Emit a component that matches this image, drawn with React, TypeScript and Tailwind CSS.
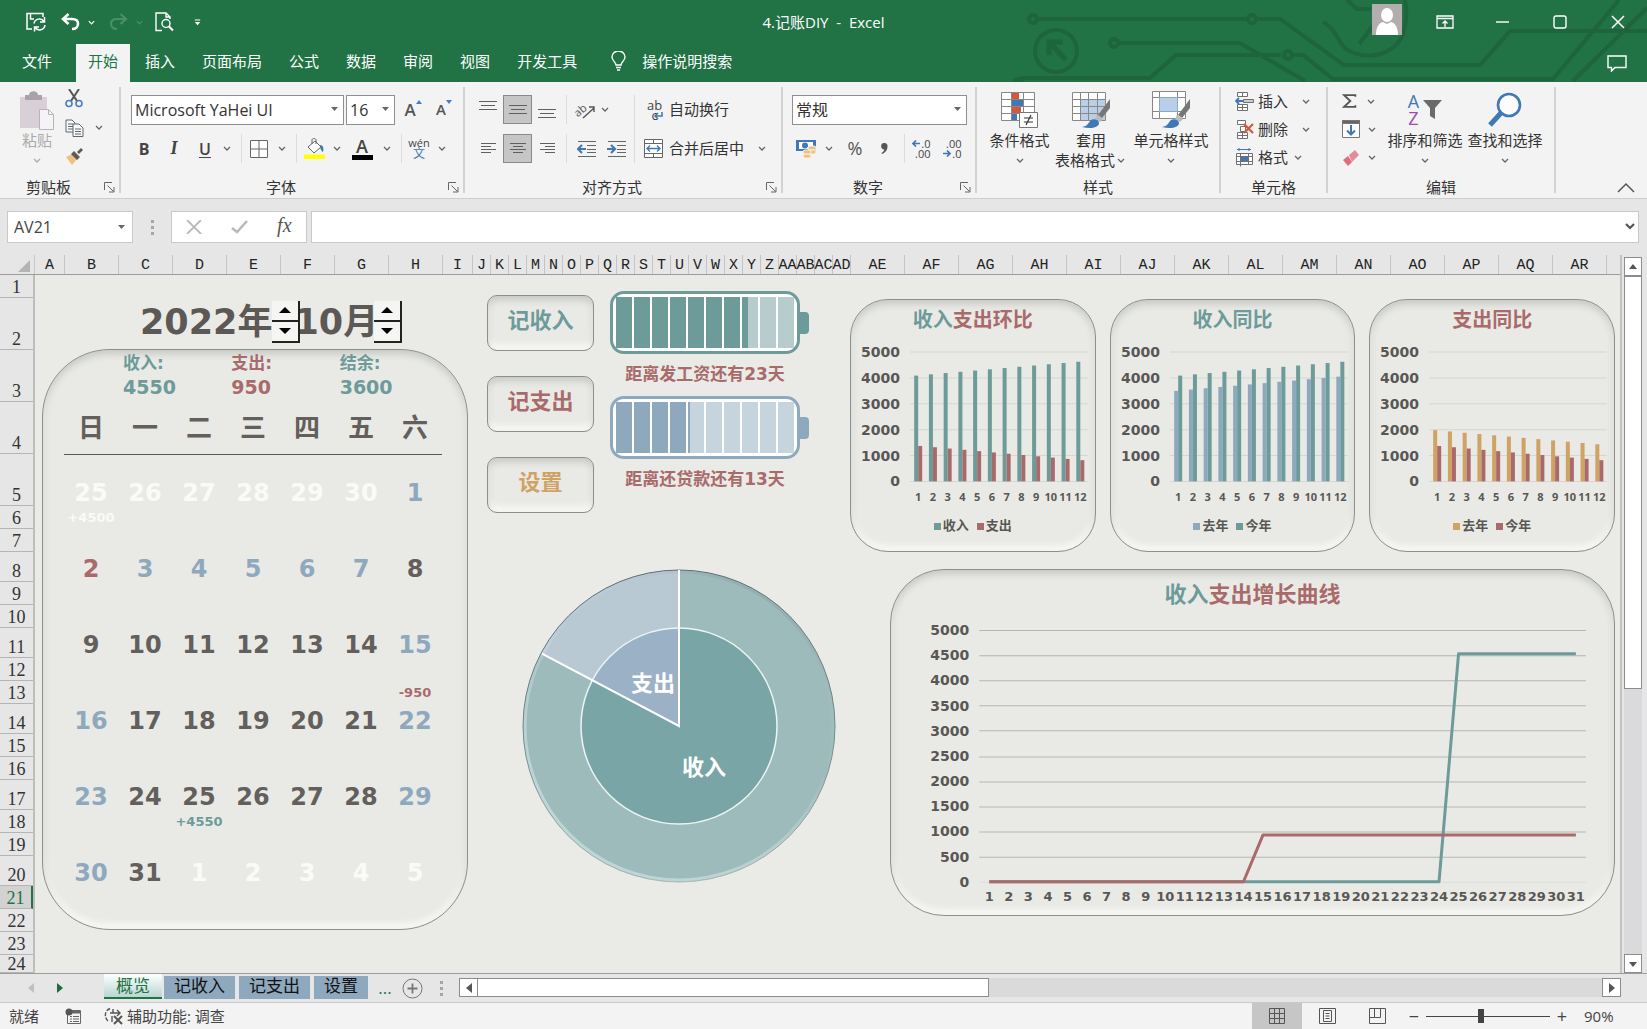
import { useState } from "react";
import type { ReactNode } from "react";

const UI = "font-['Open_Sans','Noto_Sans_CJK_SC',sans-serif]";
const DISPLAY = "font-['DejaVu_Sans','Noto_Sans_CJK_SC',sans-serif] font-bold";
const CARD =
  "border border-[#8d8f8d] bg-[#e9eae5] shadow-[inset_0_4px_7px_rgba(60,70,65,0.2),inset_0_-5px_7px_rgba(255,255,255,0.75)]";

const TEAL = "#6d9b9a";
const RED = "#a96a6c";
const BLUE = "#8ea9be";
const GOLD = "#d0a263";

const TABS = ["插入", "页面布局", "公式", "数据", "审阅", "视图", "开发工具"];

const COLUMNS = [
  { name: "A", w: "w-[30px]" },
  ..."BCDEFGH".split("").map((name) => ({ name, w: "w-[54px]" })),
  { name: "I", w: "w-[30px]" },
  ...[..."JKLMNOPQRSTUVWXYZ".split(""), "AA", "AB", "AC", "AD"].map((name) => ({ name, w: "w-[18px]" })),
  ...["AE", "AF", "AG", "AH", "AI", "AJ", "AK", "AL", "AM", "AN", "AO", "AP", "AQ", "AR"].map((name) => ({
    name,
    w: "w-[54px]",
  })),
];

const ROWS = [
  "h-[23px]", "h-[52px]", "h-[52px]", "h-[52px]", "h-[52px]", "h-[23px]", "h-[23px]", "h-[30px]",
  "h-[23px]", "h-[23px]", "h-[30px]", "h-[23px]", "h-[23px]", "h-[30px]", "h-[23px]", "h-[23px]",
  "h-[30px]", "h-[23px]", "h-[23px]", "h-[30px]", "h-[23px]", "h-[23px]", "h-[23px]", "h-[18px]",
];

const DAY_COLORS: Record<string, string> = {
  k: "text-[#635f5c]",
  b: "text-[#8ea9be]",
  r: "text-[#a96a6c]",
  w: "text-[#fafaf8]",
};

const WEEKS = [
  { days: [25, 26, 27, 28, 29, 30, 1], colors: "wwwwwwb", income: { 0: "+4500" } },
  { days: [2, 3, 4, 5, 6, 7, 8], colors: "rbbbbbk" },
  { days: [9, 10, 11, 12, 13, 14, 15], colors: "kkkkkkb", expense: { 6: "-950" } },
  { days: [16, 17, 18, 19, 20, 21, 22], colors: "bkkkkkb" },
  { days: [23, 24, 25, 26, 27, 28, 29], colors: "bkkkkkb", income: { 2: "+4550" } },
  { days: [30, 31, 1, 2, 3, 4, 5], colors: "bkwwwww" },
] as {
  days: number[];
  colors: string;
  income?: Record<number, string>;
  expense?: Record<number, string>;
}[];

const series = (from: number, to: number) =>
  Array.from({ length: 12 }, (_, i) => from + ((to - from) * i) / 11);

const INCOME = series(4090, 4625);
const EXPENSE = series(1370, 820);
const INCOME_LAST = series(3500, 4050);
const EXPENSE_LAST = series(1980, 1435);

/* ---------- small shared pieces ---------- */

const Chev = ({ className = "w-3" }: { className?: string }) => (
  <span className={`flex shrink-0 justify-center ${className}`}>
    <svg width="8" height="5" viewBox="0 0 8 5" fill="none" stroke="#666" strokeWidth="1.3">
      <path d="M1 1l3 3 3-3" />
    </svg>
  </span>
);

const Tool = ({
  label,
  className = "w-[34px]",
  on = false,
  children,
}: {
  label: string;
  className?: string;
  on?: boolean;
  children: ReactNode;
}) => (
  <button
    type="button"
    aria-label={label}
    className={`flex h-[29px] shrink-0 items-center justify-center ${className} ${
      on ? "border border-[#8a8a8a] bg-[#c6c6c6]" : ""
    }`}
  >
    {children}
  </button>
);

const Sep = ({ className = "" }: { className?: string }) => (
  <span className={`w-px shrink-0 self-stretch bg-[#dcdcdc] ${className}`} />
);

const Group = ({
  title,
  className,
  launcher = false,
  children,
}: {
  title: string;
  className: string;
  launcher?: boolean;
  children: ReactNode;
}) => (
  <section className={`relative flex shrink-0 flex-col justify-between border-r-2 border-[#d2d2d2] ${className}`}>
    {children}
    <h2 className={`text-center text-[15px] leading-3 text-[#333] ${launcher ? "pr-[22px]" : ""}`}>{title}</h2>
    {launcher && (
      <button type="button" aria-label={`${title}设置`} className="absolute right-1 bottom-0">
        <svg width="11" height="11" viewBox="0 0 11 11" fill="none" stroke="#666">
          <path d="M.5 8V.5H8M3.5 3.5l6 6M10 5v5H5" />
        </svg>
      </button>
    )}
  </section>
);

const Picker = ({ label, value, className }: { label: string; value: string; className: string }) => (
  <span className={`relative flex ${className}`}>
    <select
      aria-label={label}
      className="h-[30px] w-full appearance-none border border-[#8f8f8f] bg-white pl-[3px] text-[16px] leading-none text-[#333]"
    >
      <option>{value}</option>
    </select>
    <svg className="pointer-events-none absolute top-3 right-1.5" width="7" height="4" viewBox="0 0 7 4" fill="#666">
      <path d="M0 0h7L3.500 4z" />
    </svg>
  </span>
);

const Lines = ({ rows, w = 18 }: { rows: [number, number, number][]; w?: number }) => (
  <svg width={w} height="18" viewBox={`0 0 ${w} 18`} stroke="#5f5f5f" strokeWidth="1">
    {rows.map(([x1, x2, y]) => (
      <line key={y} x1={x1} x2={x2} y1={y + 0.5} y2={y + 0.5} />
    ))}
  </svg>
);

const Arrow = ({ dir, color = "#555" }: { dir: "up" | "down" | "left" | "right"; color?: string }) => {
  const d = { up: "M1 7l4-5 4 5z", down: "M1 3l4 5 4-5z", left: "M8 0v10L2 5z", right: "M2 0v10l6-5z" }[dir];
  return (
    <svg width="10" height="10" viewBox="0 0 10 10" fill={color}>
      <path d={d} />
    </svg>
  );
};

/* ---------- title bar ---------- */

const Circuit = () => (
  <svg
    className="pointer-events-none absolute top-0 right-0"
    width="640"
    height="82"
    viewBox="0 0 640 82"
    fill="none"
    stroke="#1e643d"
    strokeWidth="4"
  >
    <circle cx="26" cy="19" r="4" />
    <path d="M31 19h209M251 19h22l64 46h136l30-34h137" />
    <circle cx="245" cy="19" r="4" />
    <circle cx="107" cy="43" r="4" />
    <path d="M112 43h121l65 38M13 78h130l26-23h105M286 55h10l30 24h220l66-79M640 8l-74 73" />
    <circle cx="281" cy="55" r="4" />
    <circle cx="49" cy="51" r="21" />
    <path d="M42 55V42h14M43 43l16 17" strokeWidth="5" />
    <path d="M316 22c12 6 14 18 22 26 18 14 50 8 58-14 4-12 4-24 2-34M340 0l10 9h14M352 44l20-26" />
    <path d="M7 82a5 5 0 0 1 9 0" />
  </svg>
);

const TitleBar = () => (
  <header className="relative bg-[#217346] text-white">
    <Circuit />
    <div className="relative flex h-11 items-center justify-between">
      <div className="flex w-[300px] items-center pl-[26px]">
        <button type="button" aria-label="保存">
          <svg width="20" height="20" viewBox="0 0 20 20" fill="none" stroke="#fff" strokeWidth="1.5">
            <path d="M6 17H1V1.500h16V5M4.500 1.500V7H8" />
            <path d="M8 11.500a5.500 5.500 0 0 1 10-2M18.500 5v5h-4.500M19 13a5.500 5.500 0 0 1-10 2.500M8.500 19.500v-4.500H13" />
          </svg>
        </button>
        <button type="button" aria-label="撤消" className="ml-[15px] flex items-center">
          <svg width="19" height="18" viewBox="0 0 19 18" fill="none" stroke="#fff" strokeWidth="2.600">
            <path d="M7.500 1L2 6l5.500 5M2.500 6H11c4 0 6 2 6 4.800S15 16 11 16" />
          </svg>
        </button>
        <svg className="ml-2" width="7" height="5" viewBox="0 0 8 5" fill="none" stroke="#fff" strokeWidth="1.400">
          <path d="M1 1l3 3 3-3" />
        </svg>
        <button type="button" aria-label="恢复" className="ml-3.5">
          <svg width="19" height="18" viewBox="0 0 19 18" fill="none" stroke="#4b8f69" strokeWidth="2.200">
            <path d="M11.500 1L17 6l-5.500 5M16.500 6H8c-4 0-6 2-6 4.800S4 16 8 16" />
          </svg>
        </button>
        <svg className="ml-2" width="7" height="5" viewBox="0 0 8 5" fill="none" stroke="#4b8f69" strokeWidth="1.400">
          <path d="M1 1l3 3 3-3" />
        </svg>
        <button type="button" aria-label="打印预览" className="ml-3">
          <svg width="19" height="20" viewBox="0 0 19 20" fill="none" stroke="#fff" strokeWidth="1.400">
            <path d="M7 18.500H1V1h10l4 4v2M11 1v4h4" />
            <circle cx="11" cy="11.500" r="4" />
            <path d="M14 14.500l4 4" strokeWidth="2.200" />
          </svg>
        </button>
        <svg className="ml-5" width="7" height="7" viewBox="0 0 9 8" fill="#fff">
          <path d="M1 0h7v1.400H1zM1 3.500h7l-3.500 4z" />
        </svg>
      </div>
      <h1 className="text-[15px] leading-5 whitespace-pre">4.记账DIY  -  Excel</h1>
      <div className="flex w-[300px] items-center justify-end">
        <svg width="30" height="31" viewBox="0 0 30 31" className="mb-1.5">
          <path fill="#b3aead" d="M0 0h30v31H0z" />
          <ellipse cx="15" cy="11" rx="6" ry="7" fill="#fff" />
          <path d="M4 31c0-8 3-12 7-13l4 2 4-2c4 1 7 5 7 13z" fill="#fff" />
        </svg>
        <button type="button" aria-label="功能区显示选项" className="flex w-[86px] justify-center">
          <svg width="18" height="14" viewBox="0 0 18 14" fill="none" stroke="#fff" strokeWidth="1.300">
            <path d="M1 1h16v12H1zM1 3.500h16M9 12V6M6.500 8.500L9 6l2.500 2.500" />
          </svg>
        </button>
        <button type="button" aria-label="最小化" className="flex w-[29px] justify-center">
          <svg width="13" height="3" viewBox="0 0 13 3">
            <path stroke="#fff" strokeWidth="1.400" d="M0 1h13" />
          </svg>
        </button>
        <button type="button" aria-label="还原" className="flex w-[86px] justify-center">
          <svg width="14" height="14" viewBox="0 0 14 14" fill="none" stroke="#fff" strokeWidth="1.400">
            <rect x="1" y="1" width="12" height="12" rx="2" />
          </svg>
        </button>
        <button type="button" aria-label="关闭" className="mr-3.5 flex w-[30px] justify-center">
          <svg width="14" height="14" viewBox="0 0 14 14" fill="none" stroke="#fff" strokeWidth="1.500">
            <path d="M1 1l12 12M13 1L1 13" />
          </svg>
        </button>
      </div>
    </div>
    <nav className="relative flex h-[38px] items-stretch gap-[3px] pl-2.5 text-[15px] leading-[34px]">
      <button type="button" className="mr-[9px] px-3 pb-1">
        文件
      </button>
      <button type="button" className="bg-[#f3f3f3] px-3 pb-1 text-[#217346]">
        开始
      </button>
      {TABS.map((tab) => (
        <button key={tab} type="button" className="px-3 pb-1">
          {tab}
        </button>
      ))}
      <button type="button" className="flex items-center gap-4 pb-1 pl-[19px]">
        <svg width="15" height="20" viewBox="0 0 15 20" fill="none" stroke="#fff" strokeWidth="1.400">
          <path d="M5 14c0-3-4-4-4-8a6.500 6 0 0 1 13 0c0 4-4 5-4 8zM5 16.500h5M6 19h3" />
        </svg>
        操作说明搜索
      </button>
      <button type="button" aria-label="批注" className="mr-5 ml-auto">
        <svg width="20" height="17" viewBox="0 0 20 17" fill="none" stroke="#fff" strokeWidth="1.400">
          <path d="M1 1h18v11.500H8L4.500 16v-3.500H1z" />
        </svg>
      </button>
    </nav>
  </header>
);

/* ---------- ribbon ---------- */

const BrushOverlay = () => (
  <>
    <path d="M38 8v9l-8 10-4-3z" fill="#777" />
    <path d="M25 24l6 4-3 3-5-3z" fill="#bbb" />
    <path d="M10 36c6-1 6-4 9-7 3-2 8 0 8 3 0 5-9 6-17 4z" fill="#3f78b5" />
  </>
);

const BigButton = ({
  icon,
  lines,
  className,
}: {
  icon: ReactNode;
  lines: string[];
  className: string;
}) => (
  <button type="button" className={`flex shrink-0 flex-col items-center text-[15px] text-[#333] ${className}`}>
    <span className="flex h-[38px] items-center">{icon}</span>
    <span className="mt-0.5 leading-[19px]">{lines[0]}</span>
    <span className="flex items-center leading-[20px]">
      {lines[1]}
      <span className="flex h-5 items-center">
        <Chev />
      </span>
    </span>
  </button>
);

const CellIcon = ({ children }: { children: ReactNode }) => (
  <svg width="19" height="19" viewBox="0 0 19 19" fill="none" stroke="#707070">
    {children}
  </svg>
);

const Ribbon = () => (
  <div className="flex h-[117px] border-b border-[#cdcdcd] bg-[#f3f3f3] py-[5px]">
    <Group title="剪贴板" className="w-[121px]" launcher>
      <div className="flex pt-[3px] pl-[17px]">
        <button type="button" className="flex w-[40px] flex-col items-center text-[15px] leading-5 text-[#ababab]">
          <svg width="36" height="40" viewBox="0 0 36 40">
            <path fill="#d8d0d6" d="M1 7h27v31H1z" />
            <path fill="#a8a3a8" d="M6 5h4c0-5 9-5 9 0h4v5H6z" />
            <path fill="#f6f3f6" stroke="#b9b4b9" d="M20.500 19.500h9l5 5v15h-14zM29.500 19.500v5h5" />
          </svg>
          <span>粘贴</span>
          <span className="flex h-5 items-center opacity-50">
            <Chev />
          </span>
        </button>
        <div className="flex flex-col">
          <Tool label="剪切">
            <svg className="-mt-3" width="18" height="19" viewBox="0 0 18 19" fill="none" strokeWidth="2">
              <path stroke="#555" d="M4 0l8 12M14 0L6 12" />
              <circle cx="4" cy="14.500" r="3" stroke="#4a7dbb" strokeWidth="1.600" />
              <circle cx="14" cy="14.500" r="3" stroke="#4a7dbb" strokeWidth="1.600" />
            </svg>
          </Tool>
          <div className="-mt-1.5 flex items-center">
            <Tool label="复制">
              <svg width="19" height="18" viewBox="0 0 19 18" fill="#fafafa" stroke="#5d6670">
                <path d="M1 1h6l3 3v9H1zM3 5h5M3 7.500h5M3 10h5" />
                <path d="M8 5h6l4 4v8.500H8zM10 10h6M10 12.500h6M10 15h6" />
              </svg>
            </Tool>
            <Chev className="w-4" />
          </div>
          <Tool label="格式刷">
            <svg width="18" height="17" viewBox="0 0 18 17">
              <path fill="#eec27c" d="M1 9l6-3 5 5-5 6z" />
              <path fill="#5b5b5b" d="M6 6l3-3 6 6-3 3zM12 4l4-4 2 2-4 4z" />
            </svg>
          </Tool>
        </div>
      </div>
    </Group>

    <Group title="字体" className="w-[344px]" launcher>
      <div className="flex flex-col gap-2.5 pt-2 pl-2">
        <div className="flex h-[29px] gap-0.5 pl-0.5">
          <Picker label="字体" value="Microsoft YaHei UI" className="w-[213px]" />
          <Picker label="字号" value="16" className="w-[49px]" />
          <Tool label="增大字号" className="w-[32px] text-[17px] font-semibold text-[#555]">
            A
            <svg className="mb-4" width="6" height="4" viewBox="0 0 6 4" fill="#4a7dbb">
              <path d="M0 4l3-4 3 4z" />
            </svg>
          </Tool>
          <Tool label="减小字号" className="w-[26px] text-[15px] font-semibold text-[#555]">
            A
            <svg className="mb-4" width="6" height="4" viewBox="0 0 6 4" fill="#4a7dbb">
              <path d="M0 0l3 4 3-4z" />
            </svg>
          </Tool>
        </div>
        <div className="flex items-center text-[#444]">
          <Tool label="加粗" className="w-[30px] text-[16px] font-bold">
            B
          </Tool>
          <Tool label="倾斜" className="w-[30px] font-['Liberation_Serif',serif] text-[18px] font-bold italic">
            I
          </Tool>
          <Tool label="下划线" className="w-[32px] text-[16px] font-semibold underline underline-offset-2">
            U
          </Tool>
          <Chev />
          <Sep className="ml-2" />
          <Tool label="边框">
            <svg width="18" height="18" viewBox="0 0 18 18" fill="#fff" stroke="#666">
              <path d="M.5.5h17v17H.5zM9 .5v17M.5 9h17" />
            </svg>
          </Tool>
          <Chev />
          <Sep className="ml-2" />
          <Tool label="填充颜色">
            <svg width="21" height="21" viewBox="0 0 21 21">
              <path d="M4 9l7-6 6 6-7 6z" fill="#fff" stroke="#666" />
              <path d="M8 6V2c0-2 4-2 4 0v4" fill="none" stroke="#666" />
              <path d="M16 7c3 0 4 3 3 7-2-1-3-4-3-7z" fill="#3f78b5" />
              <path d="M0 16.500h21V21H0z" fill="#ff0" />
            </svg>
          </Tool>
          <Chev />
          <Tool label="字体颜色" className="w-[38px] flex-col text-[18px] leading-[17px] font-semibold">
            A
            <span className="h-[5px] w-[21px] bg-black" />
          </Tool>
          <Chev />
          <Sep className="ml-2" />
          <Tool label="拼音" className="w-[34px] flex-col text-[11px] leading-[10px]">
            <span>wén</span>
            <span className="text-[12px] leading-[12px] text-[#3f78b5]">文</span>
          </Tool>
          <Chev />
        </div>
      </div>
    </Group>

    <Group title="对齐方式" className="w-[318px]" launcher>
      <div className="flex pt-2 pl-2 text-[15px] text-[#333]">
        <div className="flex flex-col gap-2.5">
          <div className="flex">
            <Tool label="顶端对齐" className="w-[30px]">
              <Lines rows={[[0, 18, 0], [2, 16, 4], [0, 18, 8]]} />
            </Tool>
            <Tool label="垂直居中" className="w-[29px]" on>
              <Lines rows={[[0, 18, 4], [2, 16, 8], [0, 18, 12]]} />
            </Tool>
            <Tool label="底端对齐" className="w-[30px]">
              <Lines rows={[[0, 18, 8], [2, 16, 12], [0, 18, 16]]} />
            </Tool>
            <Sep className="ml-1" />
          </div>
          <div className="flex">
            <Tool label="左对齐" className="w-[30px]">
              <Lines w={15} rows={[[0, 15, 3], [0, 10, 6], [0, 15, 9], [0, 10, 12]]} />
            </Tool>
            <Tool label="居中" className="w-[29px]" on>
              <Lines rows={[[1, 17, 3], [4, 14, 6], [1, 17, 9], [4, 14, 12]]} />
            </Tool>
            <Tool label="右对齐" className="w-[30px]">
              <Lines w={15} rows={[[0, 15, 3], [5, 15, 6], [0, 15, 9], [5, 15, 12]]} />
            </Tool>
            <Sep className="ml-1" />
          </div>
        </div>
        <div className="flex w-[67px] flex-col gap-2.5 pl-1">
          <div className="flex items-center">
            <Tool label="方向" className="w-[30px]">
              <svg width="24" height="22" viewBox="0 0 24 22">
                <text x="0" y="14" fontSize="11" fill="#555" transform="rotate(-40 8 11)">
                  ab
                </text>
                <path d="M9 19L20 9M15 8h5v5" fill="none" stroke="#555" strokeWidth="1.400" />
              </svg>
            </Tool>
            <Chev className="w-2" />
          </div>
          <div className="flex">
            {["减少缩进量", "增加缩进量"].map((label, i) => (
              <Tool key={label} label={label} className="w-[30px]">
                <svg width="19" height="18" viewBox="0 0 19 18" fill="none" stroke="#666">
                  <path d="M1 1.500h18M10 5.500h9M10 9.500h9M10 12.500h9M1 16.500h18" />
                  <path
                    d={i ? "M0 9h7M4 5l4 4-4 4" : "M9 9H2M5 5L1 9l4 4"}
                    stroke="#3f78b5"
                    strokeWidth="2.200"
                  />
                </svg>
              </Tool>
            ))}
          </div>
        </div>
        <Sep />
        <div className="flex flex-col gap-2.5 pl-[9px]">
          <button type="button" className="flex h-[29px] items-center gap-1.5">
            <span className="relative flex w-[19px] flex-col pl-0.5 text-[13px] leading-[10px] text-[#444]">
              <span>ab</span>
              <span>c</span>
              <svg className="absolute right-0 bottom-0" width="10" height="8" viewBox="0 0 10 8">
                <path d="M9 0v4H3M5 1L2 4l3 3" fill="none" stroke="#3f78b5" strokeWidth="1.500" />
              </svg>
            </span>
            自动换行
          </button>
          <button type="button" className="flex h-[29px] items-center gap-1.5">
            <svg width="19" height="19" viewBox="0 0 19 19" fill="#fff" stroke="#666">
              <path d="M.5.5h18v18H.5zM.5 4.500h18M.5 14.500h18M9.500.5v4M9.500 14.500v4" />
              <path d="M3 9.500h13M6 6.500l-3 3 3 3M13 6.500l3 3-3 3" fill="none" stroke="#3f78b5" strokeWidth="1.400" />
            </svg>
            合并后居中
            <Chev className="w-6" />
          </button>
        </div>
      </div>
    </Group>

    <Group title="数字" className="w-[194px]" launcher>
      <div className="flex flex-col gap-2.5 pt-2 pl-[9px]">
        <div className="h-[29px]">
          <Picker label="数字格式" value="常规" className="w-[175px]" />
        </div>
        <div className="flex items-center text-[#555]">
          <Tool label="会计数字格式" className="w-[28px]">
            <svg width="21" height="20" viewBox="0 0 21 20">
              <path fill="#3f78b5" d="M0 1h20v11H0z" />
              <path fill="#fff" d="M3 3h14v7H3z" />
              <circle cx="9" cy="6.500" r="3" fill="#3f78b5" />
              <g fill="#f2c078" stroke="#f3f3f3">
                <rect x="12" y="7" width="8" height="4" rx="2" />
                <rect x="12" y="11" width="8" height="4" rx="2" />
                <rect x="7" y="15" width="8" height="4" rx="2" />
                <rect x="7" y="11" width="8" height="4" rx="2" />
              </g>
            </svg>
          </Tool>
          <Chev className="w-[18px]" />
          <Tool label="百分比样式" className="w-[34px] text-[18px]">
            %
          </Tool>
          <Tool label="千位分隔样式" className="w-[24px]">
            <svg width="7" height="11" viewBox="0 0 7 11" fill="#555">
              <path d="M3.500 0a3 3 0 0 1 3 3.500C6.500 7 4 10 1 11l-.5-1c1.500-.8 2.600-2 2.800-3.500A3 3 0 0 1 3.500 0z" />
            </svg>
          </Tool>
          <Sep className="ml-2" />
          {[
            { label: "增加小数位数", top: ".0", bottom: ".00" },
            { label: "减少小数位数", top: ".00", bottom: ".0" },
          ].map(({ label, top, bottom }, i) => (
            <Tool key={label} label={label} className="w-[31px]">
              <span className="flex w-[20px] flex-col text-[11px] leading-[10px] text-[#444]">
                <span className="flex items-center justify-end">
                  {i === 0 && (
                    <svg width="9" height="7" viewBox="0 0 9 7" fill="none" stroke="#3f78b5" strokeWidth="1.700">
                      <path d="M8 3.500H1M4 .5l-3 3 3 3" />
                    </svg>
                  )}
                  {top}
                </span>
                <span className="flex items-center justify-end">
                  {i === 1 && (
                    <svg width="9" height="7" viewBox="0 0 9 7" fill="none" stroke="#3f78b5" strokeWidth="1.700">
                      <path d="M0 3.500h7M4 .5l3 3-3 3" />
                    </svg>
                  )}
                  {bottom}
                </span>
              </span>
            </Tool>
          ))}
        </div>
      </div>
    </Group>

    <Group title="样式" className="w-[244px]">
      <div className="flex pt-1 pl-2">
        <BigButton
          className="w-[69px]"
          lines={["条件格式", ""]}
          icon={
            <svg width="38" height="36" viewBox="0 0 38 36">
              <path d="M.5.5h33v28H.5zM10.500.5v28M22.500.5v28M.5 7.500h33M.5 14.500h33M.5 21.500h33" fill="#fff" stroke="#888" />
              <path fill="#d4573a" d="M11 1h7v6h-7zM11 15h9v6h-9z" />
              <path fill="#3f78b5" d="M11 8h11v6H11zM11 22h5v6h-5z" />
              <path fill="#fff" stroke="#777" d="M18.500 20.500h18v15h-18z" />
              <path d="M23 26h9M23 30h9M30 23l-5 10" stroke="#333" strokeWidth="1.200" />
            </svg>
          }
        />
        <BigButton
          className="w-[74px]"
          lines={["套用", "表格格式"]}
          icon={
            <svg width="38" height="38" viewBox="0 0 38 38">
              <path fill="#fff" stroke="#888" d="M.5 1.500h33v28H.5z" />
              <path fill="#b9cfe8" d="M9 8h24v21H9z" />
              <path d="M.5 8.500h33M.5 15.500h33M.5 22.500h33M8.500 1.500v28M16.500 1.500v28M25.500 1.500v28" stroke="#888" />
              <BrushOverlay />
            </svg>
          }
        />
        <BigButton
          className="w-[86px]"
          lines={["单元格样式", ""]}
          icon={
            <svg width="38" height="38" viewBox="0 0 38 38">
              <path fill="#fff" stroke="#888" d="M.5.5h33v27H.5zM7.500.5v27M25.500.5v27M.5 6.500h33M.5 20.500h33" />
              <path fill="#b9cfe8" stroke="#8aa9cc" d="M7.500 6.500h18v14h-18z" />
              <BrushOverlay />
            </svg>
          }
        />
      </div>
    </Group>

    <Group title="单元格" className="w-[107px]">
      <div className="flex flex-col pl-3.5 text-[15px] text-[#333]">
        <button type="button" className="flex h-[28px] items-center gap-1">
          <CellIcon>
            <path fill="#fff" d="M2.500.5h10v4h-10zM7.500.5v4M2.500 12.500h10v6h-10zM7.500 12.500v6M2.500 15.500h10" />
            <path fill="#ccc" d="M8.500 7.500h10v3h-10z" />
            <path d="M8 9H1M4 6L1 9l3 3" stroke="#3f78b5" strokeWidth="1.800" />
          </CellIcon>
          插入
          <Chev className="w-7" />
        </button>
        <button type="button" className="flex h-[28px] items-center gap-1">
          <CellIcon>
            <path fill="#fff" d="M2.500.5h8v4h-8zM5.500 6.500h5v5h-5zM2.500 12.500h10v6h-10zM7.500 12.500v6M2.500 15.500h10" />
            <path d="M9 4l9 9M18 4l-9 9" stroke="#d4573a" strokeWidth="2.200" />
          </CellIcon>
          删除
          <Chev className="w-7" />
        </button>
        <button type="button" className="flex h-[28px] items-center gap-1">
          <CellIcon>
            <path d="M2 1.500h14M4 0v3M14 0v3" stroke="#3f78b5" />
            <path fill="#fff" d="M1.500 5.500h16v11h-16zM5.500 5.500v13M13.500 5.500v11M1.500 8.500h16M1.500 13.500h16" />
            <path fill="#3f78b5" stroke="none" d="M6 9h7v4H6z" />
          </CellIcon>
          格式
          <Chev />
        </button>
      </div>
    </Group>

    <Group title="编辑" className="w-[228px]">
      <div className="flex pl-2">
        <div className="flex w-[49px] flex-col">
          <button type="button" aria-label="自动求和" className="flex h-[28px] items-center pl-1.5">
            <svg width="18" height="18" viewBox="0 0 18 18" fill="none" stroke="#555" strokeWidth="2.200">
              <path d="M16 4V2H2.500L10 9l-7.500 7H16v-2" />
            </svg>
            <Chev className="w-7" />
          </button>
          <button type="button" aria-label="填充" className="flex h-[28px] items-center pl-1.5">
            <svg width="18" height="18" viewBox="0 0 18 18" fill="#fff" stroke="#777">
              <path d="M.5.5h17v17H.5z" />
              <path fill="#666" d="M.5.5h17v3H.5z" />
              <path d="M9 5v9M5 10.500l4 4 4-4" fill="none" stroke="#3f78b5" strokeWidth="2" />
            </svg>
            <Chev className="w-6" />
          </button>
          <button type="button" aria-label="清除" className="flex h-[28px] items-center pl-1.5">
            <svg width="18" height="17" viewBox="0 0 18 17">
              <path fill="#e58b98" d="M7 6l6-5 4 5-7 7z" />
              <path fill="#e06c7e" d="M1 11l5-4 4 6-4 4z" />
            </svg>
            <Chev className="w-6" />
          </button>
        </div>
        <BigButton
          className="w-[80px] pt-1"
          lines={["排序和筛选", ""]}
          icon={
            <span className="flex items-center gap-1">
              <span className="flex flex-col text-[18px] leading-[17px]">
                <span className="text-[#3f78b5]">A</span>
                <span className="text-[#9a4fb0]">Z</span>
              </span>
              <svg width="19" height="20" viewBox="0 0 19 20" fill="#6a6a6a">
                <path d="M0 0h19l-7 8v11l-5-3V8z" />
              </svg>
            </span>
          }
        />
        <BigButton
          className="w-[80px] pt-1"
          lines={["查找和选择", ""]}
          icon={
            <svg width="36" height="36" viewBox="0 0 36 36" fill="#fdfdfd" stroke="#3f78b5">
              <path d="M3 33l11-12" strokeWidth="5" />
              <circle cx="22" cy="13" r="11" strokeWidth="2.600" />
            </svg>
          }
        />
      </div>
    </Group>
    <button type="button" aria-label="折叠功能区" className="mt-auto mr-3 ml-auto">
      <svg width="18" height="11" viewBox="0 0 18 11" fill="none" stroke="#555" strokeWidth="1.500">
        <path d="M1 10l8-8 8 8" />
      </svg>
    </button>
  </div>
);

const FormulaBar = () => (
  <div className="flex h-14 items-start gap-1 bg-[#e6e6e6] pt-3 pr-2 pl-[7px]">
    <div className="relative">
      <input
        aria-label="名称框"
        defaultValue="AV21"
        className="h-8 w-[126px] border border-[#c9c9c9] bg-white pl-1.5 text-[16px] text-[#444]"
      />
      <svg className="absolute top-3.5 right-2" width="7" height="4" viewBox="0 0 7 4" fill="#666">
        <path d="M0 0h7L3.500 4z" />
      </svg>
    </div>
    <div className="flex h-8 w-[30px] flex-col items-center justify-center gap-[3px]">
      {[0, 1, 2].map((i) => (
        <span key={i} className="size-[3px] bg-[#a6a6a6]" />
      ))}
    </div>
    <div className="flex h-8 w-[136px] items-center justify-around border border-[#c9c9c9] bg-white">
      <button type="button" aria-label="取消">
        <svg width="16" height="14" viewBox="0 0 16 14" stroke="#b9b9b9" strokeWidth="1.800">
          <path d="M1 0l14 14M15 0L1 14" />
        </svg>
      </button>
      <button type="button" aria-label="输入">
        <svg width="17" height="14" viewBox="0 0 17 14" fill="none" stroke="#b9b9b9" strokeWidth="2.600">
          <path d="M1 8l5 4L16 1" />
        </svg>
      </button>
      <button
        type="button"
        aria-label="插入函数"
        className="pb-1 font-['Liberation_Serif',serif] text-[20px] leading-5 text-[#555] italic"
      >
        fx
      </button>
    </div>
    <div className="relative flex-1">
      <input aria-label="编辑栏" className="h-8 w-full border border-[#c9c9c9] bg-white px-2 text-[16px]" />
      <svg
        className="absolute top-3 right-1"
        width="10"
        height="7"
        viewBox="0 0 10 7"
        fill="none"
        stroke="#555"
        strokeWidth="2.200"
      >
        <path d="M1 1l4 4 4-4" />
      </svg>
    </div>
  </div>
);

/* ---------- calendar ---------- */

const Spinner = ({ label, onStep }: { label: string; onStep: (d: number) => void }) => (
  <span className="relative flex w-[28px] flex-col">
    {[1, -1].map((d) => (
      <button
        key={d}
        type="button"
        aria-label={`${label}${d > 0 ? "增加" : "减少"}`}
        onClick={() => onStep(d)}
        className="flex h-[21px] items-center justify-center border-r-2 border-b-2 border-[#222] bg-[#f5f5f3]"
      >
        <svg width="12" height="6" viewBox="0 0 12 6">
          <path d={d > 0 ? "M0 6l6-6 6 6z" : "M0 0l6 6 6-6z"} />
        </svg>
      </button>
    ))}
  </span>
);

const NoteRow = ({ notes, color }: { notes?: Record<number, string>; color: string }) => (
  <tr className="h-[23px]">
    {[0, 1, 2, 3, 4, 5, 6].map((i) => (
      <td key={i} className={`p-0 text-[13px] leading-[22px] ${color}`}>
        {notes?.[i]}
      </td>
    ))}
  </tr>
);

const Calendar = () => {
  const [year, setYear] = useState(2022);
  const [month, setMonth] = useState(10);

  return (
    <section className={`w-[426px] shrink-0 pt-[25px] ${DISPLAY}`}>
      <div className="flex h-[43px] items-center pl-[98px] text-[35px] leading-[42px] text-[#5b5855]">
        <span>{year}年</span>
        <Spinner label="年份" onStep={(d) => setYear(year + d)} />
        <span className="-mr-1 -ml-1.5">{month}月</span>
        <Spinner label="月份" onStep={(d) => setMonth(Math.min(12, Math.max(1, month + d)))} />
      </div>
      <div className={`mt-1.5 rounded-[68px] pb-[43px] ${CARD}`}>
        <dl className="grid h-[52px] grid-cols-3 pt-px pr-[19px] pl-[80px] leading-6">
          {[
            { k: "收入:", v: "4550", c: "text-[#6d9b9a]" },
            { k: "支出:", v: "950", c: "text-[#a96a6c]" },
            { k: "结余:", v: "3600", c: "text-[#6d9b9a]" },
          ].map(({ k, v, c }) => (
            <div key={k} className={c}>
              <dt className="text-[17px]">{k}</dt>
              <dd className="text-[19px]">{v}</dd>
            </div>
          ))}
        </dl>
        <div className="pr-[25px] pl-[21px]">
          <table className="w-full table-fixed border-collapse text-center">
            <thead>
              <tr className="h-[52px] border-b border-[#5b5855] text-[26px] text-[#635f5c]">
                {"日一二三四五六".split("").map((d) => (
                  <th key={d} className="p-0 leading-[40px]">
                    {d}
                  </th>
                ))}
              </tr>
            </thead>
            {WEEKS.map((week, w) => (
              <tbody key={w}>
                <tr className={w === 0 ? "h-[52px]" : "h-[30px]"}>
                  {week.days.map((day, i) => (
                    <td
                      key={i}
                      className={`p-0 align-bottom text-[24px] leading-[26px] ${DAY_COLORS[week.colors[i]]}`}
                    >
                      {day}
                    </td>
                  ))}
                </tr>
                {w < WEEKS.length - 1 && (
                  <>
                    <NoteRow notes={week.income} color={w === 0 ? "text-[#fafaf8]" : "text-[#6d9b9a]"} />
                    <NoteRow notes={week.expense} color="text-[#a96a6c]" />
                  </>
                )}
              </tbody>
            ))}
          </table>
        </div>
      </div>
    </section>
  );
};

/* ---------- middle column ---------- */

const Battery = ({
  level,
  frame,
  fill,
  rest,
}: {
  level: number;
  frame: string;
  fill: string;
  rest: string;
}) => (
  <div className="flex h-[63px] items-center">
    <div className={`flex h-full w-[190px] gap-0.5 rounded-[14px] border-3 bg-white p-[3px] ${frame}`}>
      {Array.from({ length: 10 }, (_, i) => (
        <span key={i} className={`flex-1 ${rest}`}>
          <span
            className={`block h-full ${fill}`}
            style={{ width: `${Math.max(0, Math.min(1, level - i)) * 100}%` }}
          />
        </span>
      ))}
    </div>
    <span className={`h-[22px] w-[9px] rounded-r-[4px] ${fill}`} />
  </div>
);

const Pie = () => {
  const angle = (-950 / 5500) * Math.PI * 2;
  const at = (r: number) => `${157 + r * Math.sin(angle)} ${157 - r * Math.cos(angle)}`;
  return (
    <svg viewBox="0 0 314 314" className={`w-[314px] self-end ${DISPLAY}`} role="img" aria-label="收入支出占比">
      <defs>
        <linearGradient id="rim" x1="0" y1="0" x2="0" y2="1">
          <stop offset="0" stopColor="#5d6e74" />
          <stop offset="0.5" stopColor="#6f8a8b" />
          <stop offset="1" stopColor="#a9b8b6" />
        </linearGradient>
        <linearGradient id="glow" x1="0.8" y1="0" x2="0.2" y2="1">
          <stop offset="0" stopColor="#5d6e74" stopOpacity="0.3" />
          <stop offset="0.4" stopColor="#ffffff" stopOpacity="0" />
          <stop offset="1" stopColor="#c4dddd" stopOpacity="0.8" />
        </linearGradient>
      </defs>
      <circle cx="157" cy="157" r="156" fill="#9ebbbc" />
      <path d={`M157 157L${at(156)}A156 156 0 0 1 157 1z`} fill="#b9c9d4" />
      <circle cx="157" cy="157" r="154" fill="none" stroke="url(#glow)" strokeWidth="3" />
      <circle cx="157" cy="157" r="156" fill="none" stroke="url(#rim)" />
      <circle cx="157" cy="157" r="98" fill="#7aa5a6" />
      <path d={`M157 157L${at(98)}A98 98 0 0 1 157 59z`} fill="#9bb1c6" />
      <circle cx="157" cy="157" r="98" fill="none" stroke="#eaf5f5" strokeWidth="1.5" />
      <path d={`M157 1V157L${at(155)}`} fill="none" stroke="#fff" strokeWidth="2" />
      <g fill="#fff" fontSize="22" textAnchor="middle">
        <text x="131" y="122">支出</text>
        <text x="182" y="206">收入</text>
      </g>
    </svg>
  );
};

const Middle = () => (
  <section className={`flex w-[349px] shrink-0 flex-col pt-4 ${DISPLAY}`}>
    <div className="flex justify-between">
      <div className="flex flex-col gap-[25px] pt-1 text-[22px] leading-[50px]">
        <button type="button" className={`h-14 w-[107px] rounded-[10px] pb-1 text-[#6d9b9a] ${CARD}`}>
          记收入
        </button>
        <button type="button" className={`h-14 w-[107px] rounded-[10px] pb-1 text-[#a96a6c] ${CARD}`}>
          记支出
        </button>
        <button type="button" className={`h-14 w-[107px] rounded-[10px] pb-1 text-[#d0a263] ${CARD}`}>
          设置
        </button>
      </div>
      <div className="flex w-[226px] flex-col">
        <Battery level={7.35} frame="border-[#6d9b9a]" fill="bg-[#6d9b9a]" rest="bg-[#b6cccd]" />
        <p className="flex h-[42px] w-[190px] items-center justify-center text-[17px] whitespace-nowrap text-[#a96a6c]">
          距离发工资还有23天
        </p>
        <Battery level={4.15} frame="border-[#8ea9be]" fill="bg-[#8ea9be]" rest="bg-[#c6d4dd]" />
        <p className="flex h-[42px] w-[190px] items-center justify-center text-[17px] whitespace-nowrap text-[#a96a6c]">
          距离还贷款还有13天
        </p>
      </div>
    </div>
    <div className="mt-14 flex flex-col">
      <Pie />
    </div>
  </section>
);

/* ---------- charts ---------- */

type Bars = { name: string; color: string; values: number[] };

const BarCard = ({ title, bars }: { title: ReactNode; bars: [Bars, Bars] }) => (
  <article className={`rounded-[38px] pt-2 pb-[15px] ${CARD}`}>
    <h3 className="text-center text-[20px] leading-6">{title}</h3>
    <svg viewBox="0 0 243 176" className="block w-full">
      {[0, 1, 2, 3, 4, 5].map((n) => {
        const y = 149 - n * 25.8;
        return (
          <g key={n}>
            <line x1="59" x2="236" y1={y} y2={y} stroke="#d5d6d2" />
            <text x="49" y={y + 5} fontSize="14" textAnchor="end" fill="#595755">
              {n * 1000}
            </text>
          </g>
        );
      })}
      {bars.map(({ name, color, values }, s) =>
        values.map((v, i) => {
          const h = (v / 5000) * 129;
          return (
            <rect key={`${name}${i}`} x={63 + s * 4 + i * 14.7} y={149 - h} width="4" height={h} fill={color} />
          );
        })
      )}
      {bars[0].values.map((_, i) => (
        <text
          key={i}
          x={67 + i * 14.7}
          y="169"
          fontSize="11"
          textAnchor="middle"
          fill="#595755"
          className="font-['Open_Sans',sans-serif]"
        >
          {i + 1}
        </text>
      ))}
    </svg>
    <ul className="flex justify-center gap-2 pt-2 text-[13px] leading-5 text-[#595755]">
      {bars.map(({ name, color }) => (
        <li key={name} className="flex items-center gap-0.5">
          <svg width="7" height="7" fill={color}>
            <rect width="7" height="7" />
          </svg>
          {name}
        </li>
      ))}
    </ul>
  </article>
);

const LineCard = () => {
  const x = (day: number) => 98 + (day - 1) * 19.5;
  const y = (v: number) => 273 - (v / 5000) * 251;
  return (
    <article className={`rounded-[54px] pt-3 ${CARD}`}>
      <h3 className="text-center text-[22px] leading-[26px] text-[#a96a6c]">
        <span className="text-[#6d9b9a]">收入</span>支出增长曲线
      </h3>
      <svg viewBox="0 0 721 306" className="block w-full">
        {Array.from({ length: 11 }, (_, n) => (
          <g key={n}>
            <line
              x1="88"
              x2="693"
              y1={Math.round(y(n * 500)) + 0.5}
              y2={Math.round(y(n * 500)) + 0.5}
              stroke={n ? "#b5b6b3" : "#dcddd9"}
            />
            <text x="78" y={y(n * 500) + 5} fontSize="14" textAnchor="end" fill="#595755">
              {n * 500}
            </text>
          </g>
        ))}
        {Array.from({ length: 31 }, (_, i) => (
          <text key={i} x={x(i + 1)} y="292" fontSize="13" textAnchor="middle" fill="#595755">
            {i + 1}
          </text>
        ))}
        <g fill="none" strokeWidth="3" strokeLinejoin="round">
          <path d={`M${x(1)} ${y(0)}H${x(24)}L${x(25)} ${y(4530)}H${x(31)}`} stroke={TEAL} />
          <path d={`M${x(1)} ${y(0)}H${x(14)}L${x(15)} ${y(930)}H${x(31)}`} stroke={RED} />
        </g>
      </svg>
    </article>
  );
};

const Charts = () => (
  <section className={`flex min-w-0 flex-1 flex-col gap-[17px] pt-6 ${DISPLAY}`}>
    <div className="grid grid-cols-3 gap-[14px]">
      <BarCard
        title={
          <>
            <span className="text-[#6d9b9a]">收入</span>
            <span className="text-[#a96a6c]">支出环比</span>
          </>
        }
        bars={[
          { name: "收入", color: TEAL, values: INCOME },
          { name: "支出", color: RED, values: EXPENSE },
        ]}
      />
      <BarCard
        title={<span className="text-[#6d9b9a]">收入同比</span>}
        bars={[
          { name: "去年", color: BLUE, values: INCOME_LAST },
          { name: "今年", color: TEAL, values: INCOME },
        ]}
      />
      <BarCard
        title={<span className="text-[#a96a6c]">支出同比</span>}
        bars={[
          { name: "去年", color: GOLD, values: EXPENSE_LAST },
          { name: "今年", color: RED, values: EXPENSE },
        ]}
      />
    </div>
    <div className="pl-10">
      <LineCard />
    </div>
  </section>
);

/* ---------- sheet ---------- */

const Sheet = () => (
  <div className="flex bg-[#e6e6e6]">
    <div className="min-w-0 flex-1">
      <div className="flex h-5 overflow-hidden border-b border-[#9c9c9c] font-['Liberation_Mono',monospace] text-[15px] leading-[22px] text-[#222]">
        <div className="flex w-[35px] shrink-0 items-end justify-end border-r border-[#c8c8c8] pr-1 pb-0.5">
          <svg width="12" height="12" viewBox="0 0 12 12" fill="#b4b4b4">
            <path d="M12 0v12H0z" />
          </svg>
        </div>
        {COLUMNS.map(({ name, w }) => (
          <div key={name} className={`flex shrink-0 justify-center border-r border-[#c4c4c4] ${w}`}>
            {name}
          </div>
        ))}
      </div>
      <div className="flex">
        <div className="w-[35px] shrink-0 border-r-2 border-[#bdbdbd] font-['Liberation_Serif',serif] text-[18px] leading-[19px]">
          {ROWS.map((h, i) => (
            <div
              key={i}
              className={`flex justify-center border-b border-[#b5b5b5] ${h} ${
                i === 20 ? "border-r-2 border-r-[#217346] bg-[#d2d2d2] text-[#217346]" : "text-[#333]"
              } ${i === 23 ? "items-start" : "items-end"}`}
            >
              {i + 1}
            </div>
          ))}
        </div>
        <main className="flex flex-1 bg-[#eaeae6] pr-[5px] pl-[7px]">
          <Calendar />
          <div className="ml-[19px] flex">
            <Middle />
          </div>
          <div className="ml-3.5 flex min-w-0 flex-1">
            <Charts />
          </div>
        </main>
      </div>
    </div>
    <div className="flex w-[27px] border-l-2 border-[#c2c2c2] pt-0.5 pr-[5px] pl-0.5">
      <div className="flex flex-1 flex-col bg-[#dadadc]">
        <button
          type="button"
          aria-label="向上滚动"
          className="flex h-[19px] items-center justify-center border border-[#8c8c8c] bg-white"
        >
          <Arrow dir="up" />
        </button>
        <div className="h-[413px] border border-[#8c8c8c] bg-white" />
        <button
          type="button"
          aria-label="向下滚动"
          className="mt-auto flex h-[19px] items-center justify-center border border-[#8c8c8c] bg-white"
        >
          <Arrow dir="down" />
        </button>
      </div>
    </div>
  </div>
);

const SheetTabs = () => (
  <div className="flex h-[30px] items-start border-y border-t-[#9c9c9c] border-b-[#c9c9c9] bg-[#e6e6e6] pr-[26px] text-[17px] leading-[22px]">
    <div className="flex h-7 w-[104px] shrink-0 items-center gap-[19px] pl-[26px]">
      <Arrow dir="left" color="#c0c0c0" />
      <Arrow dir="right" color="#1c6b3f" />
    </div>
    <button
      type="button"
      className="h-[25px] w-[58px] shrink-0 border-b-2 border-[#217346] bg-linear-to-b from-white to-[#b9d6d2] leading-[20px] text-[#217346]"
    >
      概览
    </button>
    <div className="flex gap-1 pt-0.5 pl-0.5 text-[#111]">
      {["记收入", "记支出", "设置"].map((name) => (
        <button key={name} type="button" className="h-[23px] bg-[#8ea9be] px-2.5 pb-1 leading-[18px]">
          {name}
        </button>
      ))}
    </div>
    <div className="flex h-7 shrink-0 items-center">
      <span className="w-[34px] text-center text-[#217346]">...</span>
      <button type="button" aria-label="新工作表">
        <svg width="21" height="21" viewBox="0 0 21 21" fill="none" stroke="#777">
          <circle cx="10.500" cy="10.500" r="9.500" />
          <path d="M10.500 5.500v10M5.500 10.500h10" strokeWidth="1.800" />
        </svg>
      </button>
      <div className="flex w-[36px] flex-col items-center gap-[3px]">
        {[0, 1, 2].map((i) => (
          <span key={i} className="size-[3px] bg-[#a6a6a6]" />
        ))}
      </div>
    </div>
    <div className="mt-1 flex h-[19px] flex-1 bg-[#dadada]">
      <button
        type="button"
        aria-label="向左滚动"
        className="flex w-[19px] items-center justify-center border border-[#8c8c8c] bg-white"
      >
        <Arrow dir="left" />
      </button>
      <div className="w-[44%] border border-l-0 border-[#8c8c8c] bg-white" />
      <button
        type="button"
        aria-label="向右滚动"
        className="ml-auto flex w-[19px] items-center justify-center border border-[#8c8c8c] bg-white"
      >
        <Arrow dir="right" />
      </button>
    </div>
  </div>
);

const StatusBar = () => (
  <footer className="flex h-[26px] items-center bg-[#f3f3f3] pl-[9px] text-[15px] leading-5 text-[#444]">
    <span>就绪</span>
    <button type="button" aria-label="宏录制" className="ml-[26px]">
      <svg width="16" height="16" viewBox="0 0 16 16" fill="none" stroke="#666">
        <path d="M2.500 2.500h13v13h-13z" />
        <path d="M3 4h12" strokeWidth="3" />
        <path d="M5 8.500h2M8 8.500h6M5 11h2M8 11h6M5 13.500h2M8 13.500h6" />
        <circle cx="4" cy="4" r="3.500" fill="#555" stroke="none" />
      </svg>
    </button>
    <button type="button" className="ml-[23px] flex items-center gap-[3px]">
      <svg width="20" height="18" viewBox="0 0 20 18" fill="none" stroke="#555" strokeWidth="1.400">
        <path d="M6 1.500C0 4 0 11 5 15" strokeDasharray="4 1.500" />
        <path d="M9 2v4M6 6h10M13 3l3 3-3 3M8 9v6" />
        <path d="M10 9l8 8M18 9l-8 8" strokeWidth="2" />
      </svg>
      辅助功能: 调查
    </button>
    <div className="ml-auto flex h-full items-center">
      <button type="button" aria-label="普通视图" className="flex h-full w-[50px] items-center justify-center bg-[#c6c6c6]">
        <svg width="16" height="16" viewBox="0 0 16 16" fill="none" stroke="#555">
          <path d="M.5.5h15v15H.5zM5.500.5v15M10.500.5v15M.5 5.500h15M.5 10.500h15" />
        </svg>
      </button>
      <button type="button" aria-label="页面布局视图" className="flex h-full w-[50px] items-center justify-center">
        <svg width="17" height="16" viewBox="0 0 17 16" fill="none" stroke="#555">
          <path d="M.5.5h16v15H.5zM4.500 2.500h8v11h-8zM6.500 5.500h4M6.500 8h4M6.500 10.500h4" />
        </svg>
      </button>
      <button type="button" aria-label="分页预览" className="flex h-full w-[50px] items-center justify-center">
        <svg width="17" height="16" viewBox="0 0 17 16" fill="none" stroke="#555">
          <path d="M.5.5h16v15H.5zM5.500.5v9M11.500.5v9h-6M.5 9.500h5" />
        </svg>
      </button>
      <button type="button" aria-label="缩小" className="w-[24px] text-[18px] leading-none">
        −
      </button>
      <input
        type="range"
        aria-label="显示比例"
        min="10"
        max="190"
        defaultValue="90"
        className="h-5 w-[124px] appearance-none bg-[linear-gradient(#444,#444)] bg-[length:100%_1px] bg-center bg-no-repeat [&::-webkit-slider-thumb]:h-[14px] [&::-webkit-slider-thumb]:w-[6px] [&::-webkit-slider-thumb]:appearance-none [&::-webkit-slider-thumb]:bg-[#444]"
      />
      <button type="button" aria-label="放大" className="w-[24px] text-[18px] leading-none">
        +
      </button>
      <span className="w-[73px] pl-2.5">90%</span>
    </div>
  </footer>
);

const App = () => (
  <div className={`flex min-h-screen flex-col bg-[#e6e6e6] ${UI}`}>
    <TitleBar />
    <Ribbon />
    <FormulaBar />
    <Sheet />
    <SheetTabs />
    <StatusBar />
  </div>
);

export default App;
